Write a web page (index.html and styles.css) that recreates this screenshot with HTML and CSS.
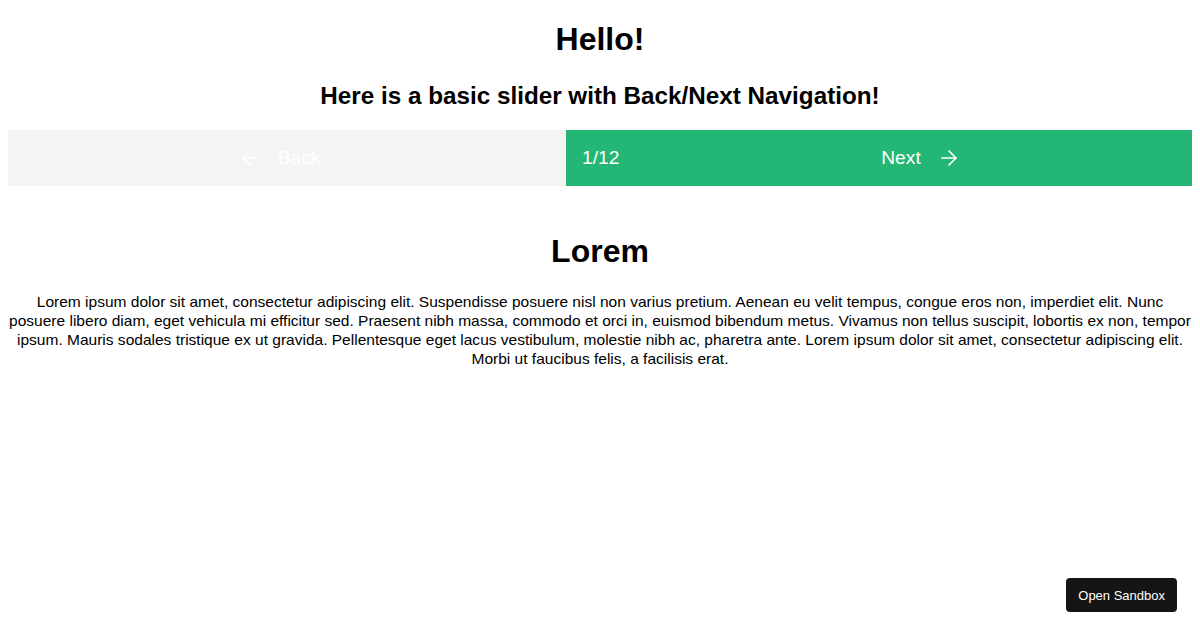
FILE: index.html
```html
<!DOCTYPE html>
<html lang="en">
<head>
<meta charset="utf-8">
<title>Slider</title>
<link rel="stylesheet" href="styles.css">
</head>
<body>
<div class="app">
  <h1 class="title">Hello!</h1>
  <h2 class="subtitle">Here is a basic slider with Back/Next Navigation!</h2>
  <div class="slider-nav">
    <button class="nav-btn back" type="button">
      <svg class="arrow" width="16" height="16" viewBox="0 0 16 16" aria-hidden="true"><line x1="15.2" y1="8" x2="1" y2="8"/><polyline points="8,1 1,8 8,15"/></svg>
      <span>Back</span>
    </button>
    <div class="counter">1/12</div>
    <button class="nav-btn next" type="button">
      <span>Next</span>
      <svg class="arrow" width="16" height="16" viewBox="0 0 16 16" aria-hidden="true"><line x1="0.8" y1="8" x2="15" y2="8"/><polyline points="8,1 15,8 8,15"/></svg>
    </button>
  </div>
  <div class="slide">
    <h1 class="slide-title">Lorem</h1>
    <p class="slide-text">Lorem ipsum dolor sit amet, consectetur adipiscing elit. Suspendisse posuere nisl non varius pretium. Aenean eu velit tempus, congue eros non, imperdiet elit. Nunc posuere libero diam, eget vehicula mi efficitur sed. Praesent nibh massa, commodo et orci in, euismod bibendum metus. Vivamus non tellus suscipit, lobortis ex non, tempor ipsum. Mauris sodales tristique ex ut gravida. Pellentesque eget lacus vestibulum, molestie nibh ac, pharetra ante. Lorem ipsum dolor sit amet, consectetur adipiscing elit. Morbi ut faucibus felis, a facilisis erat.</p>
  </div>
</div>
<a class="sandbox-btn" href="#">Open Sandbox</a>
</body>
</html>
```
FILE: styles.css
```css
html, body {
  background: #ffffff;
}
body {
  margin: 0 8px 8px;
  font-family: "Liberation Sans", Arial, sans-serif;
  color: #000;
}
.app {
  text-align: center;
}
.title {
  font-size: 32px;
  font-weight: bold;
  margin: 21.44px 0 24px;
}
.subtitle {
  font-size: 24.25px;
  font-weight: bold;
  margin: 24px 0 19.3px;
}
.slider-nav {
  display: flex;
  height: 56px;
  margin-bottom: 47.5px;
}
.nav-btn {
  display: flex;
  align-items: center;
  justify-content: center;
  gap: 20px;
  border: 0;
  margin: 0;
  font-family: "Liberation Sans", Arial, sans-serif;
  font-size: 19.2px;
  color: #ffffff;
  cursor: pointer;
}
.back {
  width: 558px;
  flex: none;
  background: #f4f4f4;
  padding: 0 12px 0 0;
}
.counter {
  width: 80px;
  flex: none;
  box-sizing: border-box;
  padding-left: 16px;
  display: flex;
  align-items: center;
  background: #24b674;
  color: #ffffff;
  font-size: 19.2px;
}
.next {
  flex: 1;
  background: #24b674;
  padding: 0;
}
.arrow {
  display: block;
  fill: none;
  stroke: #ffffff;
  stroke-width: 1.7;
  stroke-linecap: round;
  stroke-linejoin: round;
}
.slide-title {
  font-size: 32px;
  font-weight: bold;
  margin: 21.44px 0;
}
.slide-text {
  font-size: 15.52px;
  line-height: 19px;
  margin: 16px 0;
}
.sandbox-btn {
  position: fixed;
  right: 23px;
  bottom: 18px;
  height: 34px;
  box-sizing: border-box;
  padding: 0 12px;
  display: flex;
  align-items: center;
  background: #151515;
  color: #ffffff;
  border-radius: 4px;
  font-family: "Liberation Sans", Arial, sans-serif;
  font-size: 13px;
  text-decoration: none;
}
```
